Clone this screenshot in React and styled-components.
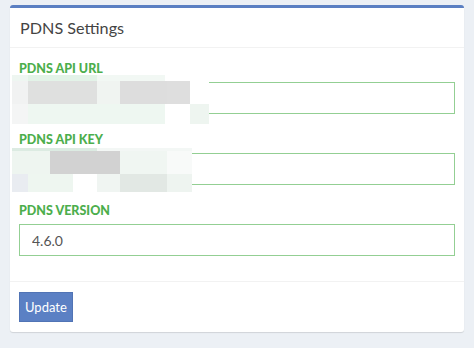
import React from 'react';
import styled, { createGlobalStyle } from 'styled-components';

const GlobalStyle = createGlobalStyle`
  html, body {
    margin: 0;
    padding: 0;
    background: #ecf0f5;
    font-family: 'Lato', 'Noto Sans', sans-serif;
  }
`;

// pixelated cover over the secret values, [width, colour] per cell
const urlBlur = {
  left: -7,
  top: -7,
  rows: [
    [6, [[16, '#eef6f1'], [69, '#e3f3e8'], [68, '#f2f8f4'], [44, 'transparent']]],
    [23, [[16, '#f1f2f2'], [69, '#dfe0df'], [23, '#f0f4f1'], [47, '#dddddd'], [23, '#dedede'], [19, '#ffffff']]],
    [20, [[16, '#f4f5f5'], [137, '#eef7f1'], [25, '#ffffff'], [19, '#eef5f0']]],
  ],
};

const keyBlur = {
  left: -7,
  top: -5,
  rows: [
    [3, [[85, '#dcebe2'], [95, '#f3f7f5']]],
    [23, [[38, '#eef5f0'], [70, '#d2d2d2'], [47, '#f0f6f2'], [25, '#f8faf9']]],
    [18, [[16, '#e9ecf1'], [45, '#eef6f0'], [24, '#ffffff'], [23, '#f0f5f2'], [47, '#e2e8e4'], [25, '#eef4f0']]],
  ],
};

function Pixelate({ blur }) {
  return (
    <BlurFrame style={{ left: blur.left, top: blur.top }}>
      {blur.rows.map(([h, cells], i) => (
        <BlurRow key={i} style={{ height: h }}>
          {cells.map(([w, c], j) => (
            <span key={j} style={{ width: w, background: c }} />
          ))}
        </BlurRow>
      ))}
    </BlurFrame>
  );
}

function Field({ label, value, blur }) {
  return (
    <FormGroup>
      <Label>{label}</Label>
      <InputWrap>
        <Input defaultValue={value} readOnly />
        {blur && <Pixelate blur={blur} />}
      </InputWrap>
    </FormGroup>
  );
}

export default function App() {
  return (
    <>
      <GlobalStyle />
      <Page>
        <Box>
          <BoxHeader>
            <Title>PDNS Settings</Title>
          </BoxHeader>
          <BoxBody>
            <Field label="PDNS API URL" value="" blur={urlBlur} />
            <Field label="PDNS API KEY" value="" blur={keyBlur} />
            <Field label="PDNS VERSION" value="4.6.0" />
          </BoxBody>
          <BoxFooter>
            <Button>Update</Button>
          </BoxFooter>
        </Box>
      </Page>
    </>
  );
}

const Page = styled.div`
  width: 474px;
  height: 348px;
  padding: 5px 10px 0 10px;
  box-sizing: border-box;
`;

const Box = styled.div`
  width: 454px;
  background: #ffffff;
  border-top: 3px solid #5b7fc2;
  border-radius: 3px;
  box-shadow: 0 1px 1px rgba(0, 0, 0, 0.12);
`;

const BoxHeader = styled.div`
  height: 39px;
  padding: 0 10px;
  display: flex;
  align-items: center;
  border-bottom: 1px solid #f2f2f2;
`;

const Title = styled.h3`
  margin: 0;
  font-size: 16.2px;
  font-weight: 400;
  color: #444444;
`;

const BoxBody = styled.div`
  padding: 12px 9px 10px 9px;
`;

const FormGroup = styled.div`
  margin-bottom: 17px;
  &:last-child {
    margin-bottom: 15px;
  }
`;

const Label = styled.div`
  font-size: 12.5px;
  line-height: 17px;
  font-weight: 900;
  color: #4cae4c;
  margin-bottom: 5px;
`;

const InputWrap = styled.div`
  position: relative;
`;

const Input = styled.input`
  display: block;
  width: 100%;
  height: 32px;
  box-sizing: border-box;
  border: 1px solid #93cf93;
  border-radius: 0;
  padding: 0 12px;
  font-family: 'Lato', 'Noto Sans', sans-serif;
  font-size: 14px;
  color: #555555;
  background: #ffffff;
  outline: none;
`;

const BlurFrame = styled.div`
  position: absolute;
  display: flex;
  flex-direction: column;
`;

const BlurRow = styled.div`
  display: flex;
  span {
    display: block;
    height: 100%;
  }
`;

const BoxFooter = styled.div`
  border-top: 1px solid #f2f2f2;
  padding: 10px 9px;
`;

const Button = styled.button`
  height: 30px;
  padding: 0 5px;
  background: #5b80c4;
  border: 1px solid #5174b5;
  border-radius: 0;
  color: #ffffff;
  font-family: 'Lato', 'Noto Sans', sans-serif;
  font-size: 13px;
`;
